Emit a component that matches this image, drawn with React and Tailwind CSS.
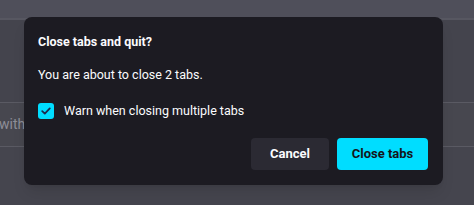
import React from 'react';

export default function App() {
    return (
        <div
            className="relative h-[205px] w-full overflow-hidden bg-[#45454e]"
            style={{ fontFamily: 'Roboto, "Liberation Sans", sans-serif' }}
        >
            {/* dimmed page behind the dialog */}
            <div className="h-[18px] bg-[#4f4f5a]" />
            <div className="h-[2px] bg-[#575761]" />
            <div className="h-[82px] bg-[#44444d]" />
            <div className="h-px bg-[#5a5a63]" />
            <div className="flex h-[43px] items-center bg-[#47474f] text-[14px] text-[#8e8e98]">
                <span className="-ml-px">with</span>
            </div>
            <div className="h-px bg-[#5a5a63]" />

            {/* dialog */}
            <div className="absolute left-[24px] top-[17px] w-[419px] rounded-lg bg-[#1c1b22] px-[14px] pb-[15px] pt-[16px] text-[12.5px] text-[#fbfbfe] shadow-lg">
                <h2 className="text-[12.5px] font-bold leading-[17px]">Close tabs and quit?</h2>
                <p className="mt-[16px] leading-[17px]">You are about to close 2 tabs.</p>
                <label className="mt-[19px] flex items-center gap-[10px]">
                    <span className="flex h-[16px] w-[16px] items-center justify-center rounded-[3px] bg-[#00ddff]">
                        <svg width="12" height="12" viewBox="0 0 12 12" fill="none">
                            <path d="M2.2 6.2 L4.8 8.6 L9.8 3.4" stroke="#1b2a4e" strokeWidth="1.8" strokeLinecap="round" strokeLinejoin="round" />
                        </svg>
                    </span>
                    <span className="leading-[17px]">Warn when closing multiple tabs</span>
                </label>
                <div className="mt-[19px] flex justify-end gap-[8px] pr-px">
                    <button className="h-[32px] w-[78px] rounded-[4px] bg-[#2b2a33] text-[13px] font-bold text-[#fbfbfe]">
                        Cancel
                    </button>
                    <button className="h-[32px] w-[91px] rounded-[4px] bg-[#00ddff] text-[13px] font-bold text-[#15141a]">
                        Close tabs
                    </button>
                </div>
            </div>
        </div>
    );
}
